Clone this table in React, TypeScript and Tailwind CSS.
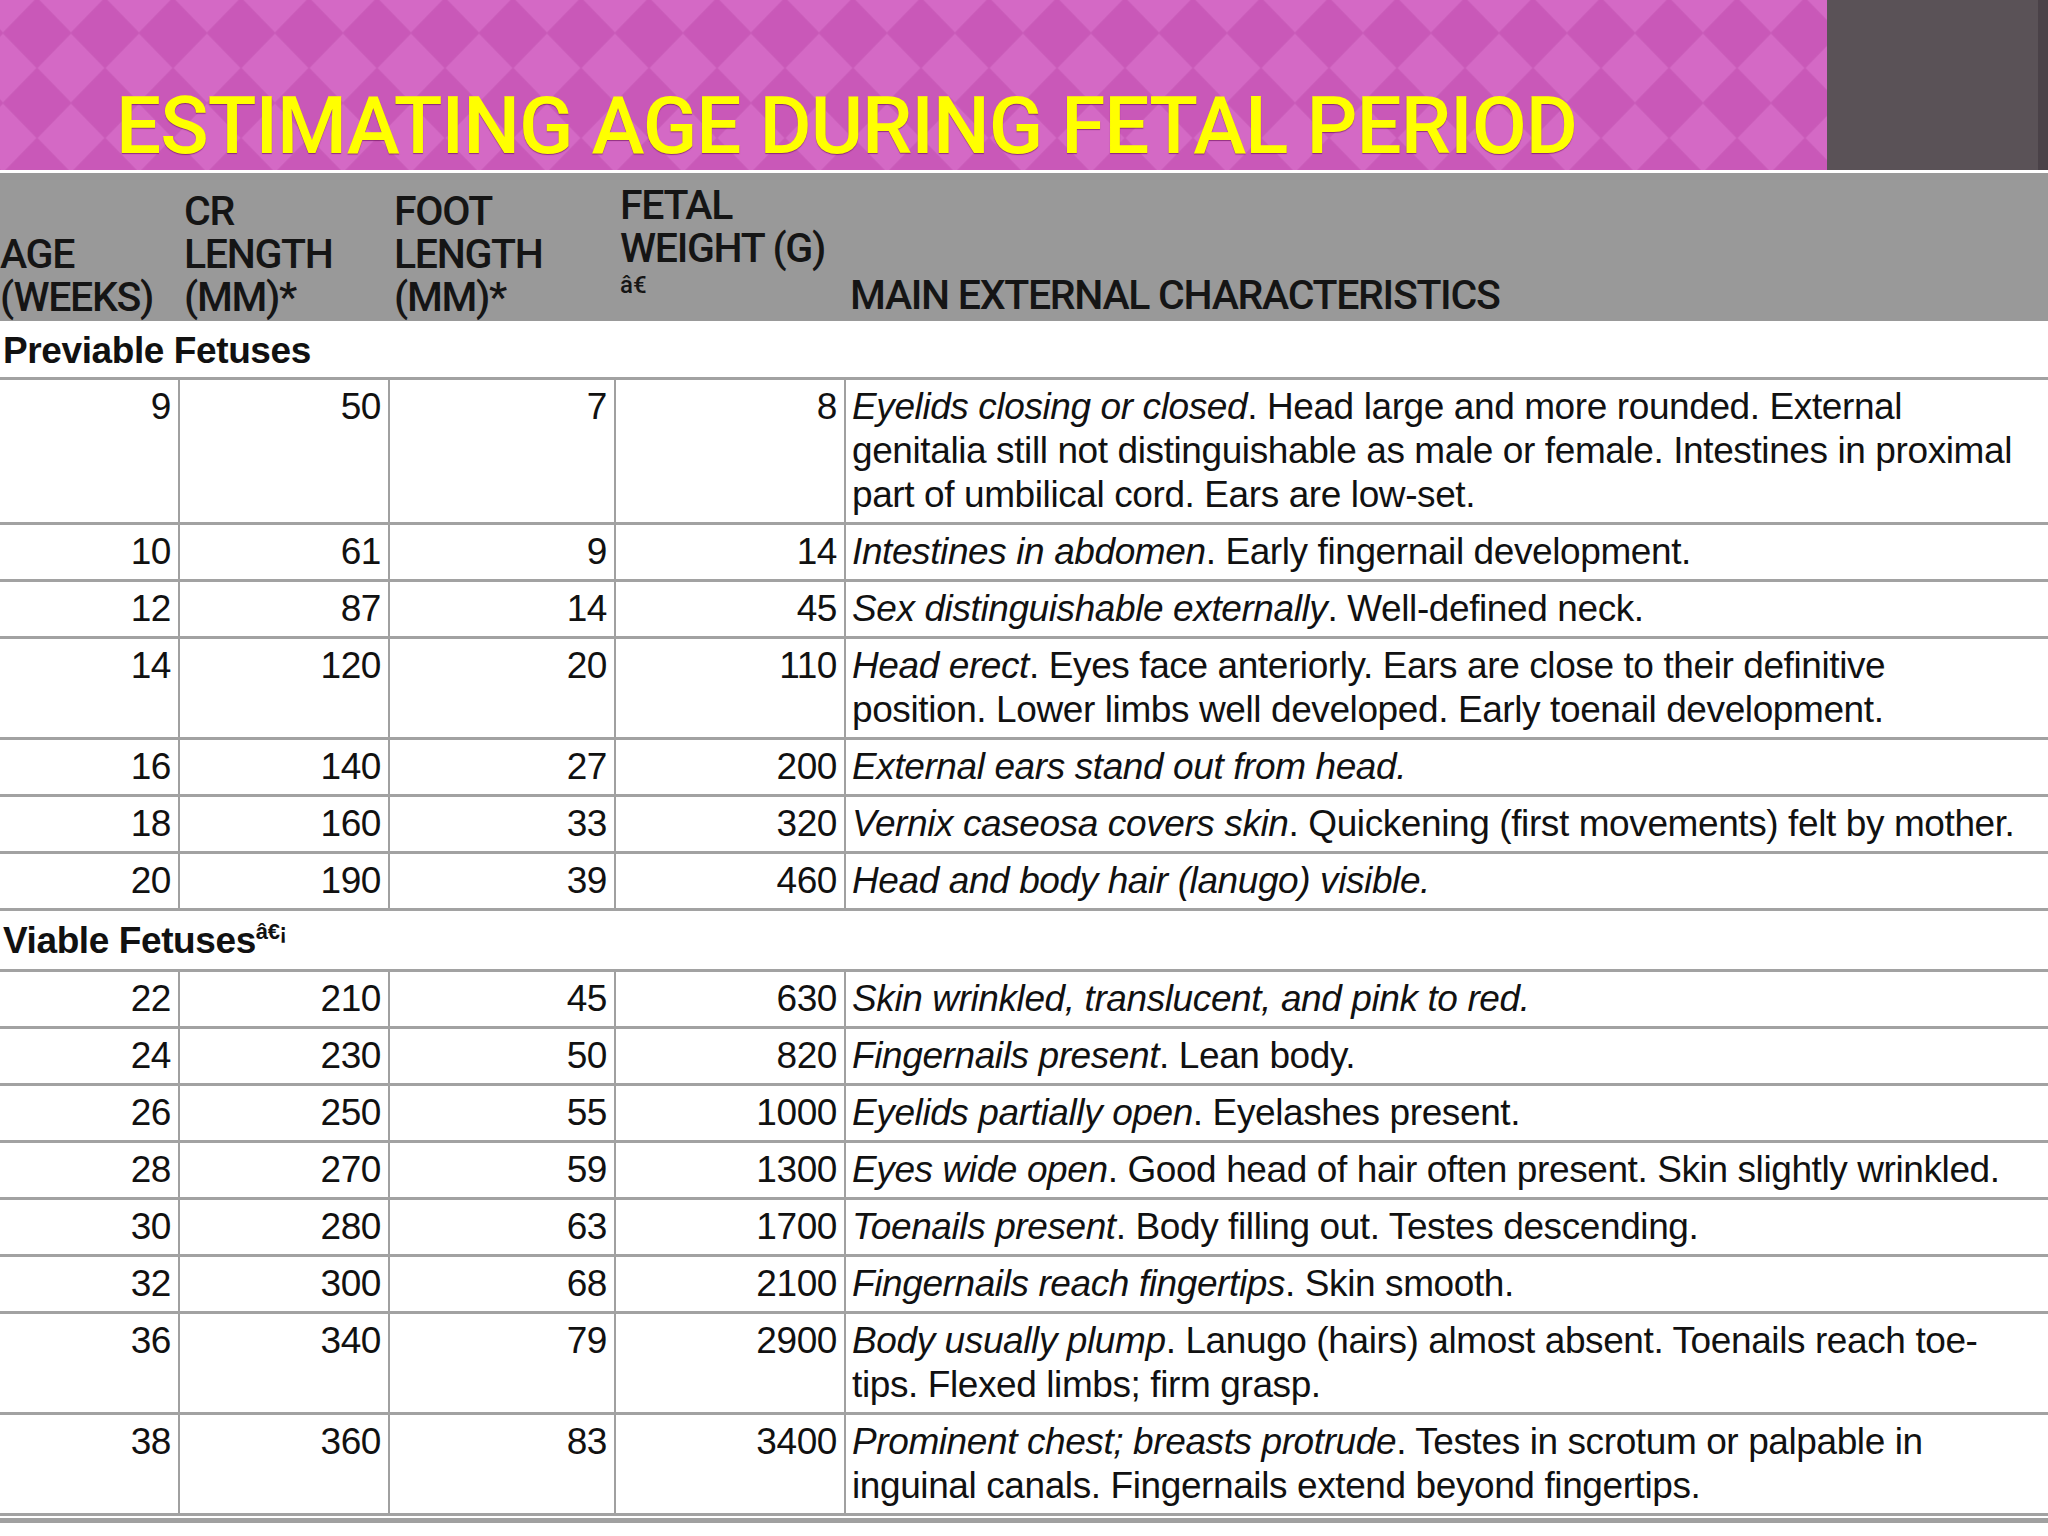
import React from 'react';

const sans = "font-['Liberation_Sans',Arial,sans-serif]";
const head = "font-['Roboto','Liberation_Sans',sans-serif]";

type Row = { age: string; cr: string; foot: string; weight: string; lines: string[] };

// text between asterisks is set in italics
const previable: Row[] = [
  {
    age: '9', cr: '50', foot: '7', weight: '8',
    lines: [
      '*Eyelids closing or closed*. Head large and more rounded. External',
      'genitalia still not distinguishable as male or female. Intestines in proximal',
      'part of umbilical cord. Ears are low-set.',
    ],
  },
  { age: '10', cr: '61', foot: '9', weight: '14', lines: ['*Intestines in abdomen*. Early fingernail development.'] },
  { age: '12', cr: '87', foot: '14', weight: '45', lines: ['*Sex distinguishable externally*. Well-defined neck.'] },
  {
    age: '14', cr: '120', foot: '20', weight: '110',
    lines: [
      '*Head erect*. Eyes face anteriorly. Ears are close to their definitive',
      'position. Lower limbs well developed. Early toenail development.',
    ],
  },
  { age: '16', cr: '140', foot: '27', weight: '200', lines: ['*External ears stand out from head.*'] },
  { age: '18', cr: '160', foot: '33', weight: '320', lines: ['*Vernix caseosa covers skin*. Quickening (first movements) felt by mother.'] },
  { age: '20', cr: '190', foot: '39', weight: '460', lines: ['*Head and body hair (lanugo) visible.*'] },
];

const viable: Row[] = [
  { age: '22', cr: '210', foot: '45', weight: '630', lines: ['*Skin wrinkled, translucent, and pink to red.*'] },
  { age: '24', cr: '230', foot: '50', weight: '820', lines: ['*Fingernails present*. Lean body.'] },
  { age: '26', cr: '250', foot: '55', weight: '1000', lines: ['*Eyelids partially open*. Eyelashes present.'] },
  { age: '28', cr: '270', foot: '59', weight: '1300', lines: ['*Eyes wide open*. Good head of hair often present. Skin slightly wrinkled.'] },
  { age: '30', cr: '280', foot: '63', weight: '1700', lines: ['*Toenails present*. Body filling out. Testes descending.'] },
  { age: '32', cr: '300', foot: '68', weight: '2100', lines: ['*Fingernails reach fingertips*. Skin smooth.'] },
  {
    age: '36', cr: '340', foot: '79', weight: '2900',
    lines: ['*Body usually plump*. Lanugo (hairs) almost absent. Toenails reach toe-', 'tips. Flexed limbs; firm grasp.'],
  },
  {
    age: '38', cr: '360', foot: '83', weight: '3400',
    lines: ['*Prominent chest; breasts protrude*. Testes in scrotum or palpable in', 'inguinal canals. Fingernails extend beyond fingertips.'],
  },
];

const cols = 'grid grid-cols-[184px_210px_226px_230px_1fr]';

function Line({ text }: { text: string }) {
  const parts = text.split('*');
  return (
    <div className="whitespace-nowrap">
      {parts.map((p, i) => (i % 2 === 1 ? <em key={i} className="italic">{p}</em> : <span key={i}>{p}</span>))}
    </div>
  );
}

function DataRow({ row }: { row: Row }) {
  const num = 'pt-[5px] pb-[5px] pr-[7px] text-right';
  return (
    <div className={`${cols} border-t-[3px] border-[#a2a2a2]`}>
      <div className={num}>{row.age}</div>
      <div className={`${num} border-l-2 border-[#a0a0a0]`}>{row.cr}</div>
      <div className={`${num} border-l-2 border-[#a0a0a0]`}>{row.foot}</div>
      <div className={`${num} border-l-2 border-[#a0a0a0]`}>{row.weight}</div>
      <div className="pt-[5px] pb-[5px] pl-[6px] border-l-2 border-[#a0a0a0]">
        {row.lines.map((l) => (
          <Line key={l} text={l} />
        ))}
      </div>
    </div>
  );
}

function Argyle() {
  return (
    <svg className="absolute inset-0 h-full w-full" aria-hidden="true">
      <defs>
        <pattern id="argyle" width="68" height="70" patternUnits="userSpaceOnUse" x="37" y="33">
          <rect width="68" height="70" fill="#c958b8" />
          <polygon points="34,0 68,35 34,70 0,35" fill="#d469c5" />
          <polygon points="34,0 68,35 34,70 0,35" fill="none" stroke="#c85ab7" strokeWidth="1.5" opacity="0.6" />
        </pattern>
      </defs>
      <rect width="100%" height="100%" fill="url(#argyle)" />
    </svg>
  );
}

export default function App() {
  return (
    <div className="w-[2048px] h-[1536px] overflow-hidden bg-white text-[#111]">
      {/* title banner */}
      <div className="flex h-[170px]">
        <div className="relative flex-1 overflow-hidden bg-[#cf61bf]">
          <Argyle />
          <h1
            className={`relative pl-[116px] pt-[82px] text-[80px] leading-[88px] tracking-[-1px] font-medium text-[#ffff00] whitespace-nowrap ${head} [text-shadow:0_1px_1px_rgba(90,0,70,0.55)]`}
          >
            ESTIMATING AGE DURING FETAL PERIOD
          </h1>
        </div>
        <div className="w-[221px] bg-[#5a5257] border-r-[10px] border-[#4a4248]" />
      </div>
      <div className="h-[3px] bg-white" />

      <div className="ml-[-6px] w-[2054px]">
        {/* column header */}
        <div
          className={`${cols} ${head} h-[148px] items-end bg-[#999999] font-medium text-[41px] leading-[43px] tracking-[-1.3px] text-[#151515]`}
        >
          <div className="pl-[6px] pb-[2px]">
            <div>AGE</div>
            <div>(WEEKS)</div>
          </div>
          <div className="pl-[6px] pb-[2px]">
            <div>CR</div>
            <div>LENGTH</div>
            <div>(MM)*</div>
          </div>
          <div className="pl-[6px] pb-[2px]">
            <div>FOOT</div>
            <div>LENGTH</div>
            <div>(MM)*</div>
          </div>
          <div className="pl-[6px] pb-[21px]">
            <div>FETAL</div>
            <div className="whitespace-nowrap">WEIGHT (G)</div>
            <div className="text-[24px] leading-[30px] tracking-normal">â€</div>
          </div>
          <div className="pl-[6px] pb-[4px] whitespace-nowrap">MAIN EXTERNAL CHARACTERISTICS</div>
        </div>

        {/* table body */}
        <div className={`${sans} text-[37px] leading-[44px] tracking-[-0.4px]`}>
          <div className="pl-[9px] pt-[8px] pb-[4px] font-bold">Previable Fetuses</div>
          {previable.map((r) => (
            <DataRow key={r.age} row={r} />
          ))}
          <div className="pl-[9px] pt-[8px] pb-[6px] font-bold border-t-[3px] border-[#a2a2a2]">
            Viable Fetuses
            <sup className="text-[22px] top-[-14px]">â€¡</sup>
          </div>
          {viable.map((r) => (
            <DataRow key={r.age} row={r} />
          ))}
          <div className="border-t-[3px] border-[#a2a2a2]" />
          <div className="mt-[2px] h-[5px] bg-[#a0a0a0]" />
        </div>
      </div>
    </div>
  );
}
